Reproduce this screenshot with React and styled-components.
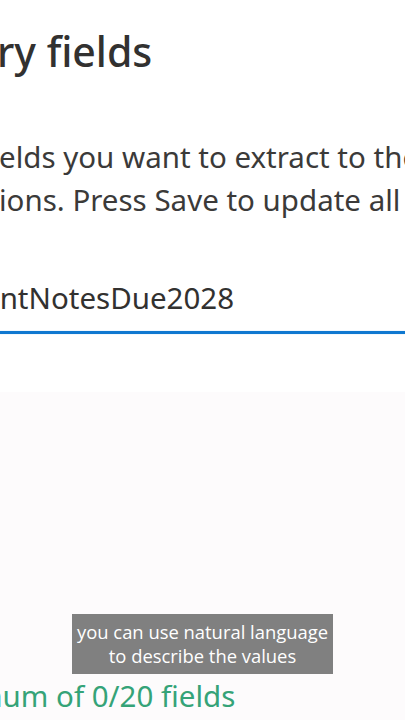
import React from 'react';
import styled, { createGlobalStyle } from 'styled-components';

const GlobalStyle = createGlobalStyle`
  html, body {
    margin: 0;
    padding: 0;
    background: #ffffff;
  }
  body {
    font-family: 'Noto Sans', 'Open Sans', sans-serif;
  }
`;

const Page = styled.div`
  position: relative;
  width: 405px;
  height: 720px;
  overflow: hidden;
  display: flex;
  flex-direction: column;
  background: #ffffff;
`;

const Top = styled.div`
  display: flex;
  flex-direction: column;
  padding-top: 24px;
`;

const Title = styled.h1`
  margin: 0 0 0 -3px;
  font-size: 41px;
  font-weight: 500;
  line-height: 54px;
  color: #323130;
  white-space: nowrap;
`;

const Description = styled.p`
  margin: 57px 0 0 -1px;
  font-size: 29.5px;
  line-height: 43px;
  color: #3b3a39;
  white-space: nowrap;
`;

const Field = styled.div`
  margin-top: 57px;
  display: flex;
  flex-direction: column;
`;

const FieldValue = styled.div`
  margin-left: -17px;
  font-size: 29.5px;
  line-height: 40px;
  color: #323130;
  white-space: nowrap;
`;

const Underline = styled.div`
  margin-top: 13px;
  height: 3px;
  background: #0f78d0;
  box-shadow: 0 0 1px #7fb8e8;
`;

const Lower = styled.div`
  flex: 1;
  margin-top: 58px;
  background: #fdfbfc;
  display: flex;
  flex-direction: column;
  justify-content: flex-end;
  padding-bottom: 6px;
`;

const Counter = styled.div`
  margin-left: -25px;
  font-size: 29.5px;
  line-height: 36px;
  color: #35a378;
  white-space: nowrap;
`;

const Caption = styled.div`
  position: absolute;
  left: 72px;
  top: 614px;
  width: 261px;
  height: 60px;
  display: flex;
  flex-direction: column;
  align-items: center;
  justify-content: center;
  background: #808080;
  color: #ffffff;
  font-family: 'Open Sans', sans-serif;
  font-size: 18.4px;
  line-height: 24px;
  text-align: center;
`;

export default function App() {
  return (
    <>
      <GlobalStyle />
      <Page>
        <Top>
          <Title>ry fields</Title>
          <Description>
            elds you want to extract to the
            <br />
            ions. Press Save to update all
          </Description>
          <Field>
            <FieldValue>entNotesDue2028</FieldValue>
            <Underline />
          </Field>
        </Top>
        <Lower>
          <Counter>mum of 0/20 fields</Counter>
        </Lower>
        <Caption>
          <span>you can use natural language</span>
          <span>to describe the values</span>
        </Caption>
      </Page>
    </>
  );
}
